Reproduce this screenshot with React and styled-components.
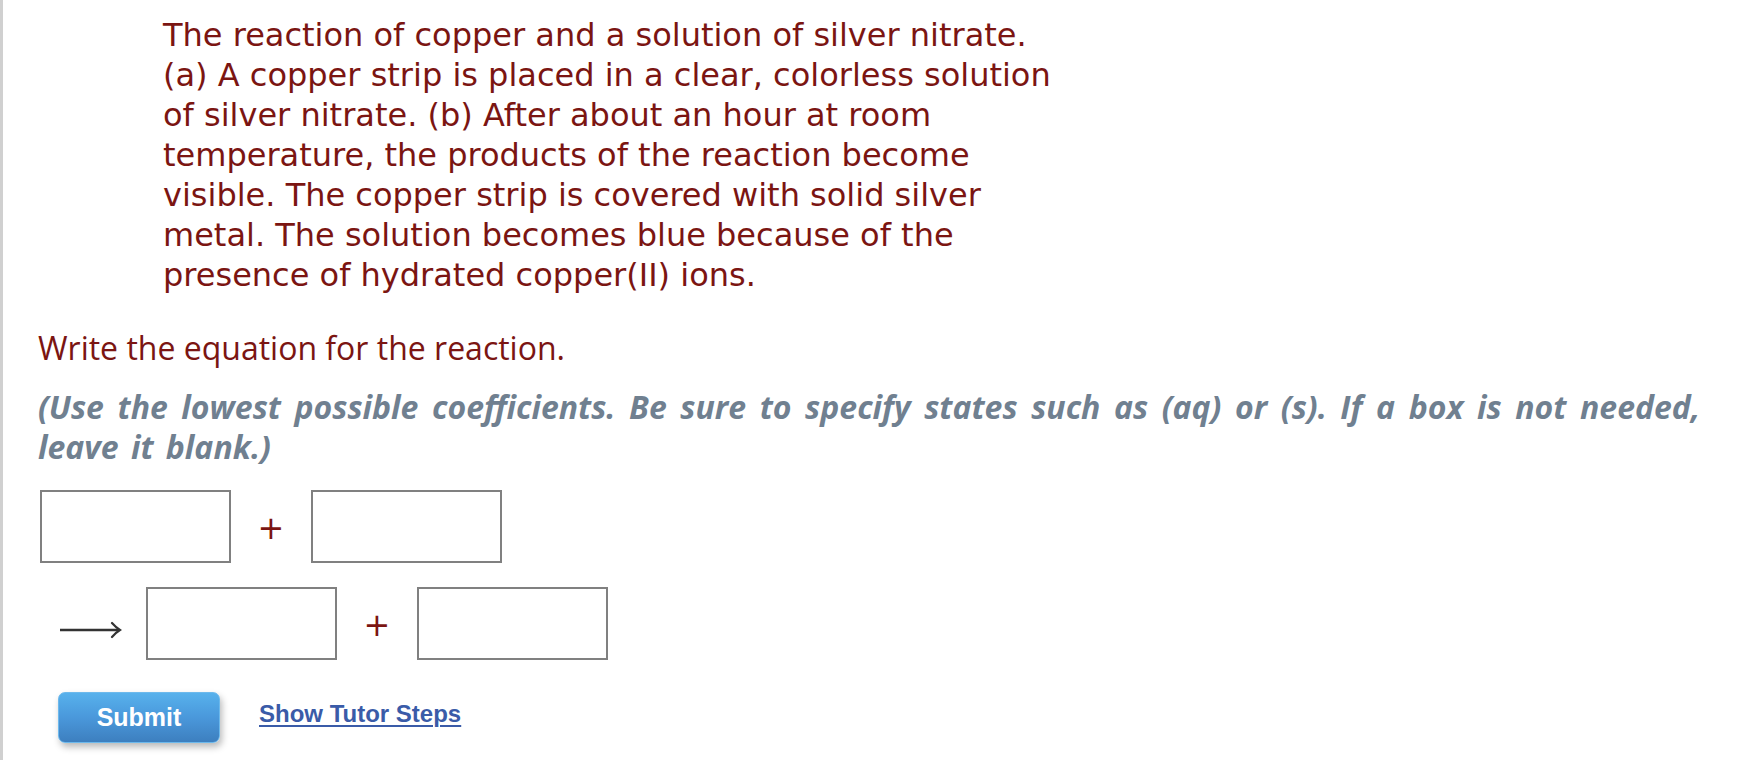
import React from "react";
import styled, { createGlobalStyle } from "styled-components";

const GlobalStyle = createGlobalStyle`
  html, body {
    margin: 0;
    padding: 0;
    background: #ffffff;
  }
  body {
    font-family: "Open Sans", "Liberation Sans", sans-serif;
  }
`;

const Page = styled.main`
  box-sizing: border-box;
  min-height: 760px;
  border-left: 3px solid #d0d0d0;
  padding: 15px 42px 0 35px;
`;

const Caption = styled.p`
  margin: 0 0 0 125px;
  font-family: "DejaVu Sans", Verdana, sans-serif;
  font-size: 32px;
  line-height: 40px;
  color: #7b1512;
  white-space: nowrap;
`;

const Prompt = styled.p`
  margin: 33px 0 0;
  font-family: "Open Sans", sans-serif;
  font-size: 32px;
  line-height: 40px;
  color: #7b1512;
`;

const Note = styled.p`
  margin: 19px 0 0;
  font-family: "Open Sans", sans-serif;
  font-style: italic;
  font-weight: 700;
  font-size: 32px;
  line-height: 40px;
  word-spacing: 4px;
  color: #708090;
  text-align: justify;
`;

const EquationRow = styled.div`
  display: flex;
  align-items: center;
  margin: ${(p) => p.$top}px 0 0 2px;
`;

const AnswerBox = styled.input`
  box-sizing: border-box;
  width: 191px;
  height: 73px;
  margin: 0;
  padding: 4px 8px;
  border: 2px solid #808080;
  border-radius: 0;
  background: #ffffff;
  font-family: "DejaVu Sans", sans-serif;
  font-size: 24px;
  outline: none;
`;

const Operator = styled.span`
  width: 80px;
  text-align: center;
  font-family: "DejaVu Sans", sans-serif;
  font-size: 32px;
  line-height: 40px;
  color: #7b1512;
  margin-top: 3px;
`;

const ArrowCell = styled.span`
  box-sizing: border-box;
  width: 106px;
  padding-left: 20px;
  display: flex;
  align-items: center;
  margin-top: 12px;
`;

const Actions = styled.div`
  display: flex;
  align-items: flex-start;
  gap: 39px;
  margin: 32px 0 0 20px;
`;

const SubmitButton = styled.button`
  box-sizing: border-box;
  width: 162px;
  height: 51px;
  padding: 0;
  border: 1px solid #6db9ec;
  border-radius: 7px;
  background: linear-gradient(to bottom, #57b1ec 0%, #4a98db 50%, #3d7fbf 100%);
  box-shadow: 2px 4px 7px rgba(0, 0, 0, 0.28);
  color: #ffffff;
  font-family: "Liberation Sans", Arial, sans-serif;
  font-weight: 700;
  font-size: 25px;
  cursor: pointer;
`;

const TutorLink = styled.a`
  margin-top: 8px;
  font-family: "Liberation Sans", Arial, sans-serif;
  font-weight: 700;
  font-size: 24px;
  color: #3a5ba8;
  text-decoration: underline;
  text-decoration-thickness: 2px;
  text-underline-offset: 3px;
  cursor: pointer;
`;

function ReactionArrow() {
  return (
    <svg width="62" height="18" viewBox="0 0 62 18" aria-hidden="true">
      <line x1="0" y1="9" x2="59" y2="9" stroke="#333333" strokeWidth="2.4" />
      <path
        d="M52 2 Q56.5 7 60 9 Q56.5 11 52 16"
        fill="none"
        stroke="#333333"
        strokeWidth="2.2"
        strokeLinecap="round"
      />
    </svg>
  );
}

export default function App() {
  return (
    <>
      <GlobalStyle />
      <Page>
        <Caption>
          The reaction of copper and a solution of silver nitrate.
          <br />
          (a) A copper strip is placed in a clear, colorless solution
          <br />
          of silver nitrate. (b) After about an hour at room
          <br />
          temperature, the products of the reaction become
          <br />
          visible. The copper strip is covered with solid silver
          <br />
          metal. The solution becomes blue because of the
          <br />
          presence of hydrated copper(II) ions.
        </Caption>
        <Prompt>Write the equation for the reaction.</Prompt>
        <Note>
          (Use the lowest possible coefficients. Be sure to specify states such
          as (aq) or (s). If a box is not needed, leave it blank.)
        </Note>
        <EquationRow $top={23}>
          <AnswerBox aria-label="reactant 1" />
          <Operator>+</Operator>
          <AnswerBox aria-label="reactant 2" />
        </EquationRow>
        <EquationRow $top={24}>
          <ArrowCell>
            <ReactionArrow />
          </ArrowCell>
          <AnswerBox aria-label="product 1" />
          <Operator>+</Operator>
          <AnswerBox aria-label="product 2" />
        </EquationRow>
        <Actions>
          <SubmitButton type="button">Submit</SubmitButton>
          <TutorLink>Show Tutor Steps</TutorLink>
        </Actions>
      </Page>
    </>
  );
}
